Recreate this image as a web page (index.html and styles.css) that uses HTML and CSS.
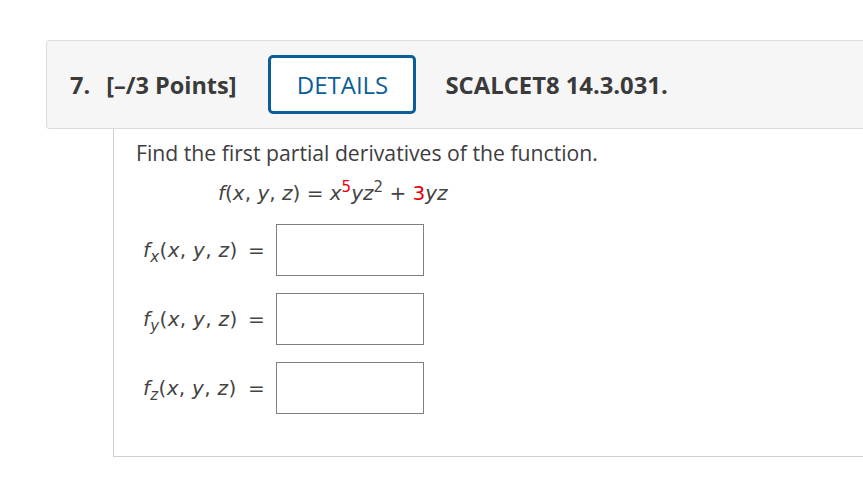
FILE: index.html
```html
<!DOCTYPE html>
<html>
<head>
<meta charset="utf-8">
<link rel="stylesheet" href="styles.css">
</head>
<body>
<div class="question">
  <div class="qhead">
    <span class="qnum">7.</span>
    <span class="qpoints">[–/3 Points]</span>
    <button class="details">DETAILS</button>
    <span class="qref">SCALCET8 14.3.031.</span>
  </div>
  <div class="qbody">
    <p class="prompt">Find the first partial derivatives of the function.</p>
    <p class="formula"><i>f</i>(<i>x</i>, <i>y</i>, <i>z</i>) = <i>x</i><sup class="red">5</sup><i>yz</i><sup>2</sup> + <span class="red">3</span><i>yz</i></p>
    <div class="answers">
      <div class="row">
        <span class="lbl"><i>f<sub>x</sub></i>(<i>x</i>, <i>y</i>, <i>z</i>)</span>
        <span class="eq">=</span>
        <input class="box" type="text">
      </div>
      <div class="row">
        <span class="lbl"><i>f<sub>y</sub></i>(<i>x</i>, <i>y</i>, <i>z</i>)</span>
        <span class="eq">=</span>
        <input class="box" type="text">
      </div>
      <div class="row">
        <span class="lbl"><i>f<sub>z</sub></i>(<i>x</i>, <i>y</i>, <i>z</i>)</span>
        <span class="eq">=</span>
        <input class="box" type="text">
      </div>
    </div>
  </div>
</div>
</body>
</html>
```
FILE: styles.css
```css
html, body {
  margin: 0;
  padding: 0;
  background: #fff;
  overflow: hidden;
}
body {
  font-family: "Open Sans", "Liberation Sans", sans-serif;
  color: #3b3b3b;
}
.question {
  margin: 40px 0 0 46px;
  width: 840px;
}
.qhead {
  box-sizing: border-box;
  height: 89px;
  background: #f6f6f6;
  border: 1px solid #dcdcdc;
  border-radius: 3px;
  display: flex;
  align-items: center;
  padding-left: 23px;
  font-size: 23.5px;
  font-weight: 700;
  color: #3a3a3a;
}
.qnum {
  margin-right: 16px;
}
.qpoints {
  margin-right: 31px;
}
.details {
  box-sizing: border-box;
  width: 148px;
  height: 59px;
  border: 3px solid #0b5e97;
  border-radius: 5px;
  background: #fff;
  color: #0b5e97;
  font-family: "Open Sans", "Liberation Sans", sans-serif;
  font-size: 24px;
  font-weight: 500;
  padding: 0 0 0 2px;
  margin-right: 30px;
}
.qref {
  font-size: 23.8px;
}
.qbody {
  box-sizing: border-box;
  margin-left: 67px;
  height: 328px;
  border-left: 1px solid #cfcfcf;
  border-bottom: 1px solid #cfcfcf;
  padding: 10px 0 0 22px;
}
.prompt {
  margin: 0;
  font-size: 21.2px;
  line-height: 28px;
  color: #3e3e3e;
}
.formula {
  margin: 13px 0 0 82px;
  font-family: "DejaVu Sans", Verdana, sans-serif;
  font-size: 20px;
  line-height: 26px;
  color: #444;
}
.formula sup, .lbl sub {
  font-size: 15px;
  line-height: 0;
}
.formula sup {
  vertical-align: 8px;
}
.red {
  color: #e8000b;
  font-style: normal;
}
.answers {
  margin-top: 18px;
  display: flex;
  flex-direction: column;
  gap: 17px;
}
.row {
  display: flex;
  align-items: center;
  padding-left: 7px;
}
.lbl {
  font-family: "DejaVu Sans", Verdana, sans-serif;
  font-size: 20px;
  color: #444;
  width: 105px;
  white-space: nowrap;
  letter-spacing: 0.3px;
}
.lbl sub {
  vertical-align: -5px;
}
.eq {
  font-family: "DejaVu Sans", Verdana, sans-serif;
  font-size: 20px;
  color: #444;
  width: 28px;
}
.box {
  box-sizing: border-box;
  width: 148px;
  height: 52px;
  border: 1px solid #7f7f7f;
  border-radius: 0;
  background: #fff;
  margin: 0;
  padding: 0;
}
```
